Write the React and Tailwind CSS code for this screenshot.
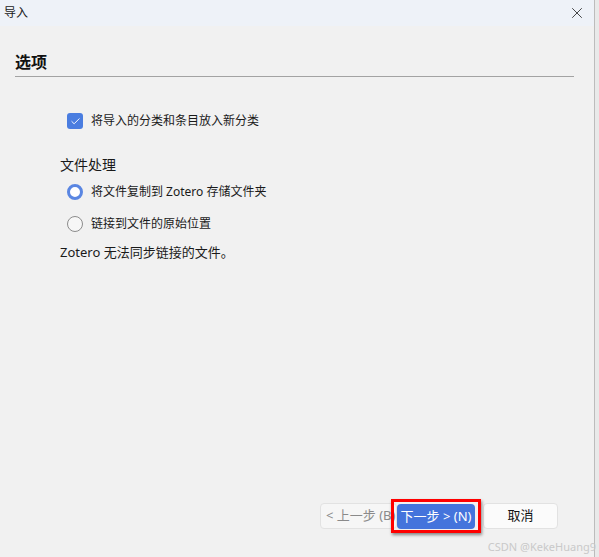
import { X, Check } from "lucide-react";

const font = { fontFamily: '"Noto Sans", "Noto Sans CJK SC", sans-serif' };

export default function App() {
  return (
    <div className="relative flex w-[599px] h-[557px] bg-[#e9e9e9] overflow-hidden" style={font}>
      {/* Dialog window */}
      <div className="flex flex-col w-[595px] h-full bg-[#f1f1f1] border-r border-[#bcbcbc]">
        {/* Title bar */}
        <div className="flex items-center justify-between h-[26px] bg-[#eef2f8] pl-[4px] pr-[8px]">
          <span className="text-[12px] leading-none text-[#1a1a1a]">导入</span>
          <X className="w-[18px] h-[18px] text-[#222]" strokeWidth={1.1} />
        </div>

        {/* Content */}
        <div className="flex-1 flex flex-col pl-[15px] pr-[20px]">
          <h2 className="mt-[26px] pb-[4px] text-[16px] leading-[20px] font-bold text-[#111] border-b border-[#a3a3a3]">
            选项
          </h2>

          {/* Checkbox */}
          <div className="flex items-center mt-[36px] ml-[52px] h-[16px]">
            <div className="w-[16px] h-[16px] rounded-[3px] bg-[#4a7de0] flex items-center justify-center">
              <Check className="w-[11px] h-[11px] text-white" strokeWidth={2} />
            </div>
            <span className="ml-[8px] text-[12px] leading-none text-[#1a1a1a]">
              将导入的分类和条目放入新分类
            </span>
          </div>

          {/* File handling */}
          <div className="mt-[26px] ml-[45px] text-[14px] leading-[20px] text-[#1a1a1a]">文件处理</div>

          <div className="flex items-center mt-[9px] ml-[52px] h-[16px]">
            <div className="w-[16px] h-[16px] rounded-full border-[3px] border-[#5a86e2] bg-white" />
            <span className="ml-[8px] text-[12px] leading-none text-[#1a1a1a]">
              将文件复制到 Zotero 存储文件夹
            </span>
          </div>

          <div className="flex items-center mt-[16px] ml-[52px] h-[16px]">
            <div className="w-[16px] h-[16px] rounded-full border border-[#8c8c8c] bg-[#f7f7f7]" />
            <span className="ml-[8px] text-[12px] leading-none text-[#1a1a1a]">
              链接到文件的原始位置
            </span>
          </div>

          <p className="mt-[12px] ml-[45px] text-[13px] leading-[16px] text-[#1a1a1a]">
            Zotero 无法同步链接的文件。
          </p>
        </div>

        {/* Footer buttons */}
        <div className="flex justify-end items-center pr-[36px] pb-[28px]">
          <button className="w-[77px] h-[26px] rounded-[4px] border border-[#e2e2e2] bg-[#f6f6f6] text-[13px] text-[#8a8a8a] text-left pl-[5px] whitespace-nowrap overflow-hidden">
            &lt; 上一步 (B)
          </button>
          <div className="relative">
            <button className="w-[78px] h-[25px] rounded-[4px] bg-[#4474dc] text-[13px] text-white whitespace-nowrap">
              下一步 &gt; (N)
            </button>
            <div className="absolute -left-[6px] -top-[4px] w-[90px] h-[34px] border-[3px] border-[#ff0000] shadow-[1px_2px_3px_rgba(0,0,0,0.45)]" />
          </div>
          <button className="ml-[8px] w-[75px] h-[26px] rounded-[4px] border border-[#e2e2e2] bg-[#fbfbfb] text-[13px] text-[#111]">
            取消
          </button>
        </div>
      </div>

      {/* Watermark */}
      <span className="absolute right-[3px] bottom-[3px] text-[11px] leading-[14px] text-[#c9c9c9]">
        CSDN @KekeHuang9
      </span>
    </div>
  );
}
